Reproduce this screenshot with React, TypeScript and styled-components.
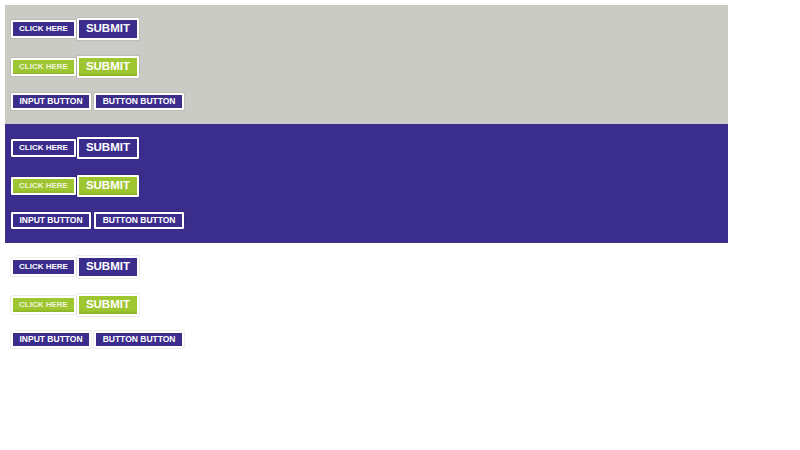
import * as React from 'react'
import styled, { createGlobalStyle, css } from 'styled-components'

const colors = {
  gray: '#cbcbc6',
  purple: '#3b2d8b',
  green: '#9ec630',
  greenDark: '#8cb127',
  white: '#ffffff',
}

type Tone = 'gray' | 'purple' | 'white'
type Kind = 'purple' | 'green'
type Size = 'small' | 'large' | 'wide'

const GlobalStyle = createGlobalStyle`
  body {
    margin: 5px;
    background: #fff;
    font-family: "Liberation Sans", Arial, sans-serif;
  }
`

const Section = styled.section<{ $tone: Tone }>`
  width: 723px;
  box-sizing: border-box;
  padding: 13px 6px 14px;
  display: flex;
  flex-direction: column;
  gap: 15.5px;
  background: ${p => (p.$tone === 'white' ? 'transparent' : colors[p.$tone])};
`

const Row = styled.div<{ $gap?: number }>`
  display: flex;
  align-items: center;
  gap: ${p => p.$gap ?? 1}px;
`

const sizes = {
  small: css`
    height: 18px;
    padding: 0 6px;
    font-size: 8px;
  `,
  large: css`
    height: 22px;
    padding: 0 7px;
    font-size: 11.5px;
  `,
  wide: css`
    height: 17px;
    padding: 0 6.5px;
    font-size: 8.5px;
  `,
}

const Btn = styled.button<{ $kind: Kind; $size: Size }>`
  box-sizing: border-box;
  display: inline-flex;
  align-items: center;
  justify-content: center;
  margin: 0;
  border: 2px solid ${colors.white};
  border-radius: 1px;
  box-shadow: 0 0 0 1px rgba(0, 0, 0, 0.07);
  font-family: "Liberation Sans", Arial, sans-serif;
  font-weight: bold;
  text-transform: uppercase;
  line-height: 1;
  cursor: pointer;
  ${p => sizes[p.$size]};
  ${p =>
    p.$kind === 'green'
      ? css`
          background: linear-gradient(${colors.green} 80%, ${colors.greenDark});
          color: ${p.$size === 'small' ? '#eef3dc' : colors.white};
        `
      : css`
          background: ${colors.purple};
          color: ${colors.white};
        `};
`

const ButtonSet: React.FC<{ tone: Tone }> = ({ tone }) => (
  <Section $tone={tone}>
    <Row>
      <Btn $kind="purple" $size="small">Click Here</Btn>
      <Btn $kind="purple" $size="large">Submit</Btn>
    </Row>
    <Row>
      <Btn $kind="green" $size="small">Click Here</Btn>
      <Btn $kind="green" $size="large">Submit</Btn>
    </Row>
    <Row $gap={3}>
      <Btn as="input" type="button" value="Input Button" $kind="purple" $size="wide" />
      <Btn $kind="purple" $size="wide">Button Button</Btn>
    </Row>
  </Section>
)

export default function App() {
  return (
    <>
      <GlobalStyle />
      <ButtonSet tone="gray" />
      <ButtonSet tone="purple" />
      <ButtonSet tone="white" />
    </>
  )
}
